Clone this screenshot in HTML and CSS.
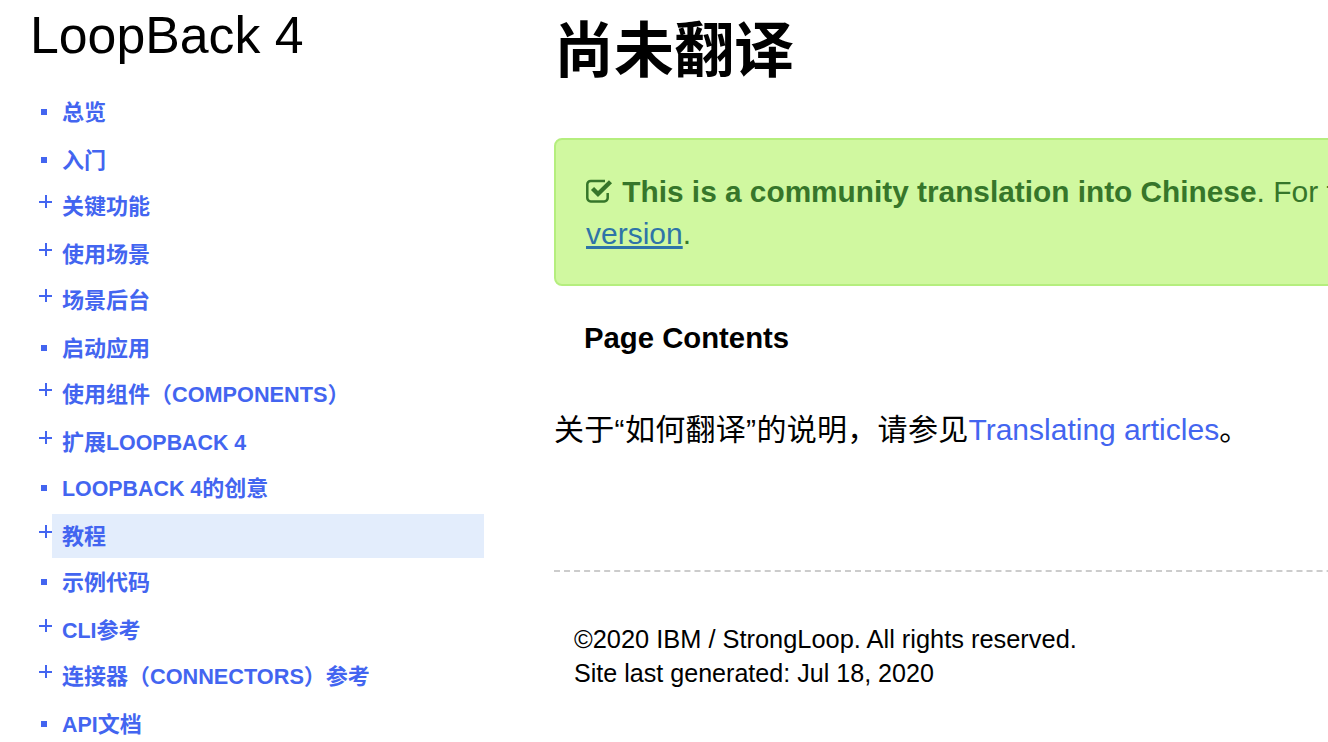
FILE: index.html
```html
<!DOCTYPE html>
<html lang="zh">
<head>
<meta charset="utf-8">
<title>尚未翻译 | LoopBack 4</title>
<link rel="stylesheet" href="styles.css">
</head>
<body>
<div class="page">
  <aside class="sidebar">
    <div class="brand">LoopBack 4</div>
    <ul class="nav">
      <li class="leaf"><a href="#">总览</a></li>
      <li class="leaf"><a href="#">入门</a></li>
      <li class="folder"><a href="#">关键功能</a></li>
      <li class="folder"><a href="#">使用场景</a></li>
      <li class="folder"><a href="#">场景后台</a></li>
      <li class="leaf"><a href="#">启动应用</a></li>
      <li class="folder"><a href="#">使用组件（<span class="lat-wide">COMPONENTS</span>）</a></li>
      <li class="folder"><a href="#">扩展<span class="lat">LOOPBACK 4</span></a></li>
      <li class="leaf"><a href="#"><span class="lat">LOOPBACK 4</span>的创意</a></li>
      <li class="folder current"><a href="#">教程</a></li>
      <li class="leaf"><a href="#">示例代码</a></li>
      <li class="folder"><a href="#"><span class="lat">CLI</span>参考</a></li>
      <li class="folder"><a href="#">连接器（<span class="lat-wide">CONNECTORS</span>）参考</a></li>
      <li class="leaf"><a href="#"><span class="lat">API</span>文档</a></li>
    </ul>
  </aside>
  <main class="content">
    <h1 class="title">尚未翻译</h1>
    <div class="alert">
      <svg class="check" viewBox="0 0 27 24" width="27" height="24" aria-hidden="true"><path d="M21.7 14v5a3.4 3.4 0 0 1-3.4 3.4H4.7A3.4 3.4 0 0 1 1.3 19V5.300A3.400 3.400 0 0 1 4.700 1.900H19" fill="none" stroke="currentColor" stroke-width="2.500"/><path d="M6.500 9.500l5.500 5.500L24.500 2.800" fill="none" stroke="currentColor" stroke-width="4.400"/></svg>
      <strong>This is a community translation into Chinese</strong>. For the latest information, see the English<br><a href="#">version</a>.
    </div>
    <h2 class="toc">Page Contents</h2>
    <p class="note"><span class="lead">关于“如何翻译”的说明，请参见</span><a href="#">Translating articles</a>。</p>
    <footer class="footer">
      <p class="copyright">©2020 IBM / StrongLoop. All rights reserved.</p>
      <p class="generated">Site last generated: Jul 18, 2020</p>
    </footer>
  </main>
</div>
</body>
</html>
```
FILE: styles.css
```css
html, body {
  margin: 0;
  padding: 0;
  height: 100%;
  overflow: hidden;
  background: #fff;
}
body {
  font-family: "Liberation Sans", "Noto Sans CJK SC", sans-serif;
  color: #000;
}
.page {
  display: grid;
  grid-template-columns: 554px 1200px;
  height: 742px;
  overflow: hidden;
}
.sidebar {
  padding-left: 31px;
}
.brand {
  font-size: 51.8px;
  line-height: 56px;
  margin: 7px 0 0 -1px;
}
.nav {
  list-style: none;
  margin: 28px 0 0;
  padding: 0;
  width: 453px;
}
.nav li {
  display: flow-root;
  position: relative;
  height: 46px;
  padding-left: 21px;
  box-sizing: border-box;
}
.nav li:nth-child(odd) {
  height: 48px;
}
.nav a {
  display: block;
  color: #4365f0;
  font-weight: 700;
  font-size: 22px;
  line-height: 30px;
  padding: 7px 0 7px 10px;
  text-decoration: none;
}
.lat {
  font-size: 21.4px;
}
.lat-wide {
  font-size: 21.7px;
}
.nav li.leaf::before {
  content: "";
  position: absolute;
  left: 10px;
  top: 18px;
  width: 6px;
  height: 6px;
  background: #4365f0;
}
.nav li.folder::before {
  content: "";
  position: absolute;
  left: 8px;
  top: 10px;
  width: 13px;
  height: 13px;
  background:
    linear-gradient(#4365f0, #4365f0) center / 13px 2px no-repeat,
    linear-gradient(#4365f0, #4365f0) center / 2px 13px no-repeat;
}
.nav li.current a {
  background: #e3edfc;
  margin-top: -1px;
  padding-top: 8px;
  padding-bottom: 6px;
}
.content {
  min-width: 0;
}
.title {
  font-size: 60px;
  line-height: 68px;
  font-weight: 700;
  margin: 12px 0 0;
  font-family: "Noto Sans CJK SC", sans-serif;
}
.alert {
  margin-top: 58px;
  box-sizing: border-box;
  height: 148px;
  padding: 31px 30px;
  background: #d0f8a0;
  border: 2px solid #b5ee7e;
  border-radius: 8px;
  color: #36762a;
  font-size: 30px;
  line-height: 42px;
  white-space: nowrap;
}
.alert strong {
  font-size: 29.8px;
  margin-left: 1px;
}
.alert a {
  color: #2e74a8;
}
.check {
  vertical-align: -1px;
}
.toc {
  font-size: 29.3px;
  line-height: 36px;
  font-weight: 700;
  margin: 34px 0 0 30px;
}
.note {
  font-size: 30px;
  line-height: 42px;
  margin: 53px 0 0;
}
.lead {
  letter-spacing: 0.3px;
}
.note a {
  color: #4365f0;
  text-decoration: none;
}
.footer {
  margin-top: 119px;
  border-top: 2px dashed #ccc;
  padding: 50px 0 0 20px;
  line-height: 34px;
}
.footer p {
  margin: 0;
}
.copyright {
  font-size: 25.4px;
}
.generated {
  font-size: 25.1px;
}
```
